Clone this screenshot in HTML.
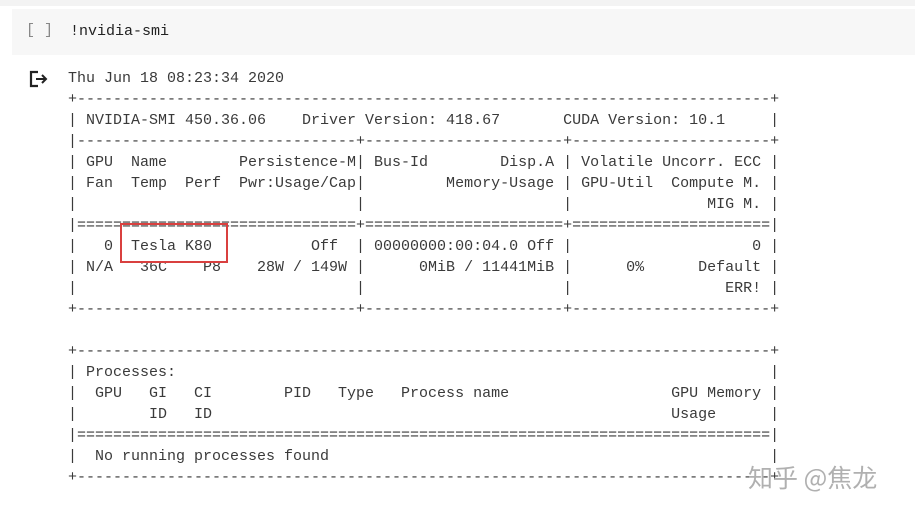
<!DOCTYPE html>
<html><head><meta charset="utf-8"><style>
body{margin:0;width:915px;height:514px;background:#fff;overflow:hidden;position:relative;font-family:"Liberation Mono",monospace;}
.top{position:absolute;left:0;top:0;width:915px;height:6px;background:#f3f3f3;}
.cell{position:absolute;left:12px;top:9px;width:903px;height:46px;background:#f7f7f7;}
.br{position:absolute;left:26px;top:22px;font-size:15px;color:#888;}
.cmd{position:absolute;left:70px;top:23px;font-size:15px;color:#222;}
.icon{position:absolute;left:29px;top:70px;}
pre{position:absolute;left:68px;top:68px;margin:0;font-family:"Liberation Mono",monospace;font-size:15px;line-height:21px;color:#3a3a3a;}
.red{position:absolute;left:120px;top:223px;width:104px;height:36px;border:2.5px solid #d9403f;}
.wm{position:absolute;left:748px;top:459px;font-family:"Noto Sans CJK SC",sans-serif;font-size:25px;color:#b0b0b0;letter-spacing:0px;}
</style></head><body>
<div class="top"></div>
<div class="cell"></div>
<div class="br">[ ]</div>
<div class="cmd">!nvidia-smi</div>
<svg class="icon" width="20" height="18" viewBox="0 0 20 18"><path d="M9 2H2v14h7" fill="none" stroke="#222" stroke-width="2.2"/><path d="M7 9h10M13 5l4 4-4 4" fill="none" stroke="#222" stroke-width="2"/></svg>
<pre>Thu Jun 18 08:23:34 2020       
+-----------------------------------------------------------------------------+
| NVIDIA-SMI 450.36.06    Driver Version: 418.67       CUDA Version: 10.1     |
|-------------------------------+----------------------+----------------------+
| GPU  Name        Persistence-M| Bus-Id        Disp.A | Volatile Uncorr. ECC |
| Fan  Temp  Perf  Pwr:Usage/Cap|         Memory-Usage | GPU-Util  Compute M. |
|                               |                      |               MIG M. |
|===============================+======================+======================|
|   0  Tesla K80           Off  | 00000000:00:04.0 Off |                    0 |
| N/A   36C    P8    28W / 149W |      0MiB / 11441MiB |      0%      Default |
|                               |                      |                 ERR! |
+-------------------------------+----------------------+----------------------+
                                                                               
+-----------------------------------------------------------------------------+
| Processes:                                                                  |
|  GPU   GI   CI        PID   Type   Process name                  GPU Memory |
|        ID   ID                                                   Usage      |
|=============================================================================|
|  No running processes found                                                 |
+-----------------------------------------------------------------------------+</pre>
<div class="red"></div>
<div class="wm">知乎 @焦龙</div>
</body></html>
